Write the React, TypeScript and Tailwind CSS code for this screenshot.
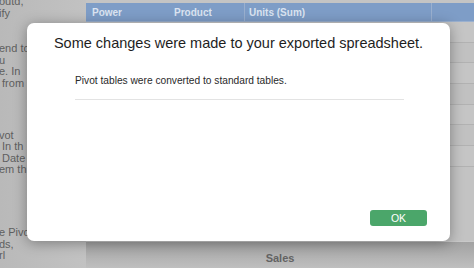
const sideGroups: { top: string; lines: string[] }[] = [
  { top: 'mt-[-4px]', lines: ['outd,', 'ify'] },
  { top: 'mt-[24px]', lines: ['end to', 'u', 'e. In', ' from'] },
  { top: 'mt-[40px]', lines: ['vot', ' In th', ' Date', 'em th'] },
  { top: 'mt-[51px]', lines: ['e Pivot', 'ds,', 'rl'] },
];

const rows = [0, 1, 2, 3, 4, 5, 6];

export default function App() {
  return (
    <div className="relative w-[474px] h-[268px] overflow-hidden bg-[#bcbcbc] font-['Liberation_Sans',Arial,sans-serif]">
      {/* dimmed spreadsheet behind the sheet */}
      <div className="flex h-full">
        <div className="w-[86px] shrink-0 bg-gradient-to-r from-[#b9b9b9] to-[#c2c2c2] overflow-hidden">
          {sideGroups.map((g, i) => (
            <div key={i} className={`${g.top} flex flex-col`}>
              {g.lines.map((l, j) => (
                <div key={j} className="h-[11.6px] leading-[11.6px] text-[11px] text-[#5f5f5f] whitespace-pre ml-[-1px]">
                  {l}
                </div>
              ))}
            </div>
          ))}
        </div>
        <div className="flex-1 flex flex-col">
          <div className="h-[3px] bg-[#c4c4c4]" />
          <div className="h-[19px] bg-[#7e9dc7] flex items-center text-[10px] font-bold text-[#dbe4f1] border-b border-[#9ab0cf]">
            <div className="w-[82px] pl-[6px]">Power</div>
            <div className="w-[76px] pl-[6px]">Product</div>
            <div className="w-[187px] pl-[4px] border-l border-[#9ab0cf] h-full flex items-center">Units (Sum)</div>
            <div className="flex-1 border-l border-[#9ab0cf] h-full" />
          </div>
          <div className="flex-1 bg-[#c3c3c3] flex flex-col">
            {rows.map((r) => (
              <div key={r} className={`h-[20.7px] border-b border-[#b2b2b2] ${r % 2 ? 'bg-[#c1c1c1]' : 'bg-[#c5c5c5]'}`} />
            ))}
          </div>
          <div className="h-[27px] bg-gradient-to-b from-[#a2a2a2] to-[#bfbfbf] border-t border-[#c9c9c9] flex justify-center pt-[8px]">
            <span className="text-[11px] font-bold text-[#636363]">Sales</span>
          </div>
        </div>
      </div>

      {/* alert sheet */}
      <div className="absolute left-[27px] top-[23px] w-[423px] h-[218px] bg-white rounded-[7px] shadow-[0_2px_14px_rgba(0,0,0,0.35)] flex flex-col">
        <div className="pt-[10px] text-center text-[14.5px] leading-[20px] text-[#1e1e1e]">
          Some changes were made to your exported spreadsheet.
        </div>
        <div className="px-[48px] pt-[22px]">
          <div className="text-[10.2px] leading-[12px] text-[#2a2a2a]">Pivot tables were converted to standard tables.</div>
          <div className="mt-[12px] h-px bg-[#e3e3e3] mr-[-2px]" />
        </div>
        <div className="mt-auto flex justify-end pr-[23px] pb-[15px]">
          <button className="w-[57px] h-[16px] rounded-[3px] bg-[#4ba66a] text-white text-[10.5px] leading-[16px] text-center">
            OK
          </button>
        </div>
      </div>
    </div>
  );
}
